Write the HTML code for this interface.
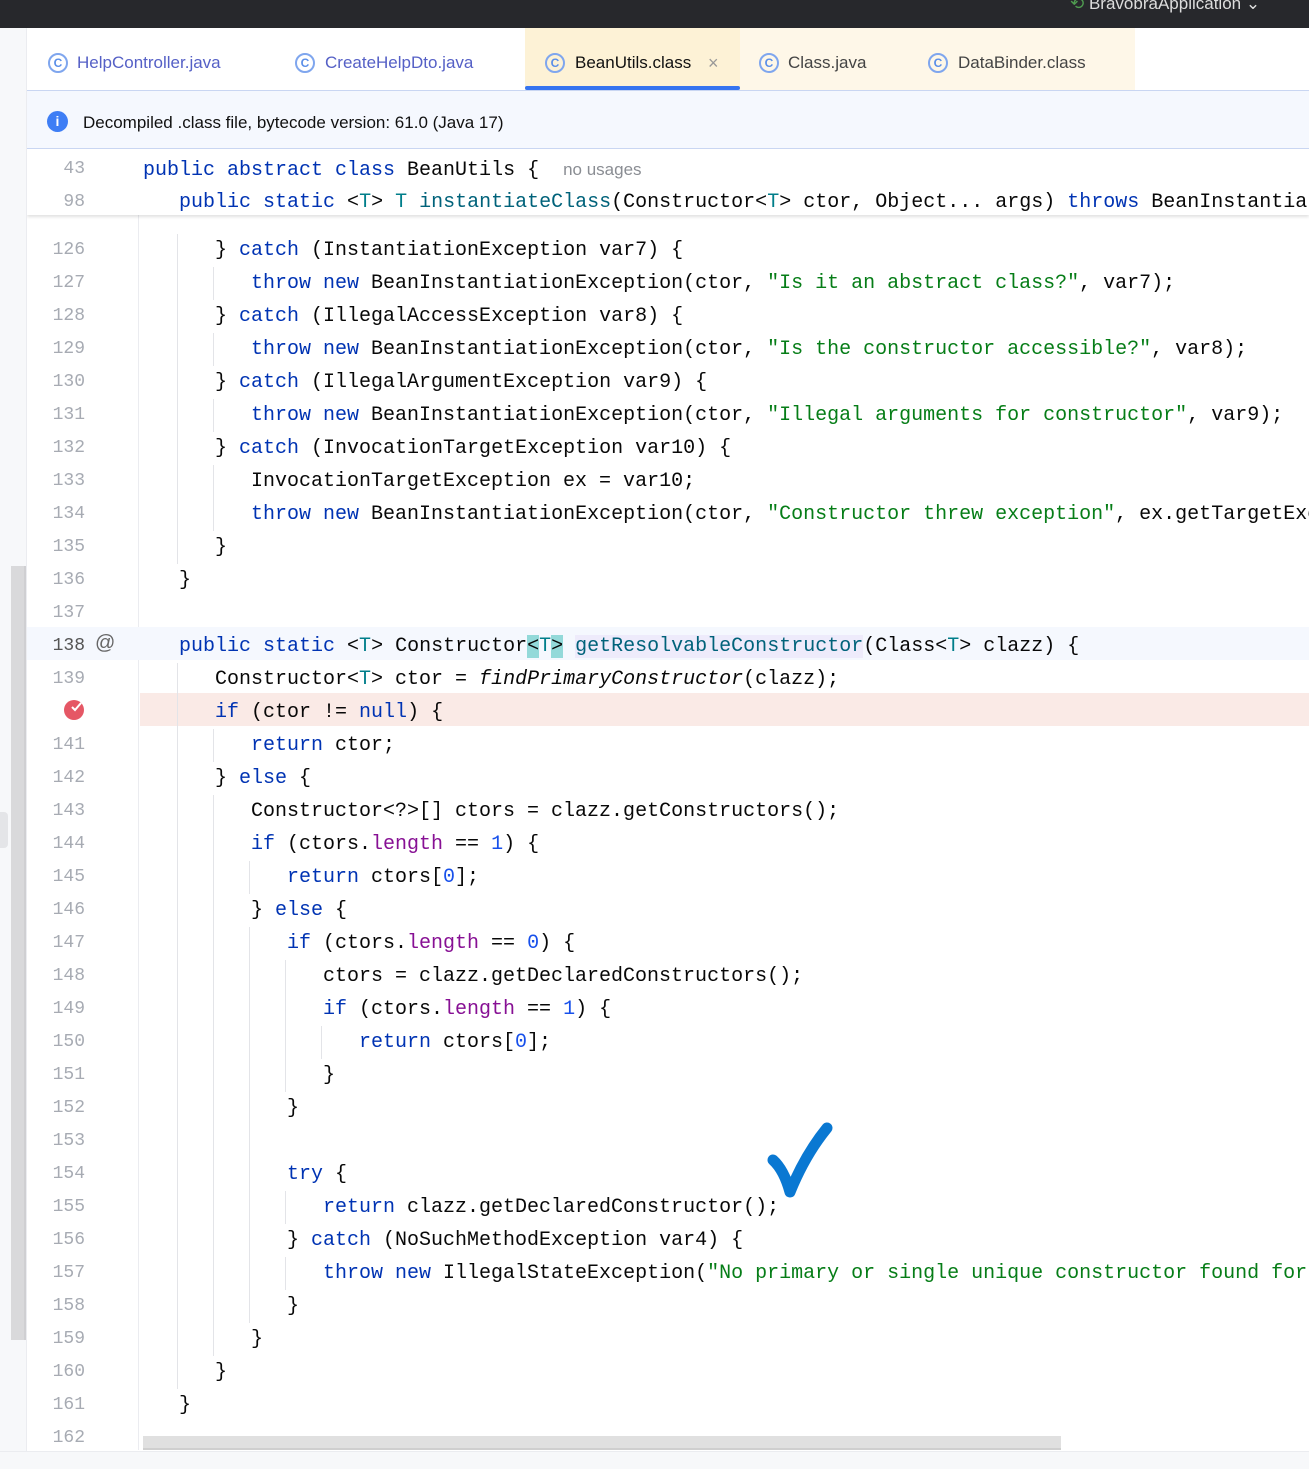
<!DOCTYPE html>
<html><head><meta charset="utf-8"><style>
*{margin:0;padding:0;box-sizing:border-box}
body{width:1309px;height:1469px;overflow:hidden;background:#fff;position:relative;font-family:"Liberation Sans",sans-serif}
.top{position:absolute;left:0;top:0;width:1309px;height:28px;background:#27282c}
.left{position:absolute;left:0;top:28px;width:27px;height:1441px;background:#f7f8fa;border-right:1px solid #ebecf0}
.vs{position:absolute;left:11px;top:566px;width:15px;height:774px;background:#d9d9db;border-right:2px solid #cfcfd2}
.tabs{position:absolute;left:27px;top:28px;width:1282px;height:63px;background:#fff;border-bottom:1px solid #c9d6f2}
.tab{position:absolute;top:0;height:62px;font-size:17px;line-height:70px;color:#444}
.ic{position:absolute;top:25px;width:20px;height:20px;border:2px solid #7fa6ee;border-radius:50%;color:#5b8fe8;font-size:12px;line-height:16px;text-align:center;font-weight:bold}
.info{position:absolute;left:27px;top:91px;width:1282px;height:58px;background:#f5f8fe;border-bottom:1px solid #c9d6f2;font-size:17px;color:#111}
.code{position:absolute;left:27px;top:150px;width:1282px;height:1300px;overflow:hidden}
.ln{position:absolute;left:0;width:1282px;height:33px;font-family:"Liberation Mono",monospace;font-size:20px;line-height:33px;color:#080808;white-space:pre}
.num{position:absolute;left:0;width:58px;text-align:right;color:#a7abb3;font-size:18px}
.tx{position:absolute;left:116px}
.g{position:absolute;top:0;width:1px;height:33px;background:#e3e4e8}
.k{color:#0033b3}.s{color:#067d17}.t{color:#007e8a}.f{color:#871094}.n{color:#1750eb}.m{color:#00627a}.i{font-style:italic}
.gut{position:absolute;left:111px;top:0;width:1px;height:1300px;background:#ebecf0}
</style></head><body>
<div class="top"><div style="position:absolute;left:1070px;top:-6px;color:#ddd;font-size:17px"><span style="color:#4f9c50">⟲</span> BravobraApplication ⌄</div></div>
<div class="left"><div class="vs" style="top:538px"></div><div style="position:absolute;left:0;top:784px;width:8px;height:36px;background:#e4e5e8;border-radius:0 4px 4px 0"></div></div>
<div class="tabs">
 <div class="tab" style="left:0;width:250px"><div class="ic" style="left:21px">C</div><span style="position:absolute;left:50px;color:#5560c6">HelpController.java</span></div>
 <div class="tab" style="left:250px;width:248px"><div class="ic" style="left:18px">C</div><span style="position:absolute;left:48px;color:#5560c6">CreateHelpDto.java</span></div>
 <div class="tab" style="left:498px;width:215px;background:#fdf2d6"><div class="ic" style="left:20px">C</div><span style="position:absolute;left:50px;color:#111">BeanUtils.class</span><span style="position:absolute;left:183px;color:#999;font-size:18px">×</span><div style="position:absolute;left:0;bottom:0;width:215px;height:4px;background:#3574f0;border-radius:2px"></div></div>
 <div class="tab" style="left:713px;width:395px;background:#fef7e8"><div class="ic" style="left:19px">C</div><span style="position:absolute;left:48px">Class.java</span><div class="ic" style="left:188px">C</div><span style="position:absolute;left:218px">DataBinder.class</span></div>
</div>
<div class="info"><div style="position:absolute;left:20px;top:20px;width:21px;height:21px;border-radius:50%;background:#3e7ef5;color:#fff;font-size:14px;font-weight:bold;text-align:center;line-height:21px">i</div><span style="position:absolute;left:56px;top:22px">Decompiled .class file, bytecode version: 61.0 (Java 17)</span></div>

<div class="code">
<div class="gut"></div>
<div style="position:absolute;left:0;top:477px;width:1282px;height:33px;background:#f5f8fe"></div>
<div style="position:absolute;left:113px;top:543px;width:1169px;height:33px;background:#faeae6"></div>
<div id="lines"></div>
<div style="position:absolute;left:0;top:0;width:1282px;height:65px;background:#fff;box-shadow:0 2px 3px rgba(0,0,0,0.12)">
 <div class="ln" style="top:3px"><span class="num">43</span><span class="tx"><span class="k">public abstract class</span> BeanUtils {  <span style="font-family:'Liberation Sans',sans-serif;font-size:17px;color:#8a8d93">no usages</span></span></div>
 <div class="ln" style="top:36px"><span class="num">98</span><span class="tx">   <span class="k">public static</span> &lt;<span class="t">T</span>&gt; <span class="t">T</span> <span class="m">instantiateClass</span>(Constructor&lt;<span class="t">T</span>&gt; ctor, Object... args) <span class="k">throws</span> BeanInstantiationException {</span></div>
</div>
</div>

<svg style="position:absolute;left:0;top:0" width="1309" height="1469">
 <circle cx="74" cy="710" r="10" fill="#e55765"/>
 <path d="M72 707l3 3 6-7" stroke="#fff" stroke-width="2" fill="none"/>
 <path d="M773 1160 Q784 1170 790 1192 Q805 1155 827 1128" stroke="#0a78d2" stroke-width="11" fill="none" stroke-linecap="round" stroke-linejoin="round"/>
</svg>
<div style="position:absolute;left:95px;top:632px;font-size:20px;color:#666">@</div>
<div style="position:absolute;left:143px;top:1436px;width:918px;height:14px;background:#e0e0e0;border-bottom:2px solid #cfcfcf"></div>
<div style="position:absolute;left:0;top:1451px;width:1309px;height:18px;background:#f7f8fa;border-top:1px solid #ebecf0"></div>

<script>
var L=[
[126,2,'} <span class="k">catch</span> (InstantiationException var7) {'],
[127,3,'<span class="k">throw new</span> BeanInstantiationException(ctor, <span class="s">"Is it an abstract class?"</span>, var7);'],
[128,2,'} <span class="k">catch</span> (IllegalAccessException var8) {'],
[129,3,'<span class="k">throw new</span> BeanInstantiationException(ctor, <span class="s">"Is the constructor accessible?"</span>, var8);'],
[130,2,'} <span class="k">catch</span> (IllegalArgumentException var9) {'],
[131,3,'<span class="k">throw new</span> BeanInstantiationException(ctor, <span class="s">"Illegal arguments for constructor"</span>, var9);'],
[132,2,'} <span class="k">catch</span> (InvocationTargetException var10) {'],
[133,3,'InvocationTargetException ex = var10;'],
[134,3,'<span class="k">throw new</span> BeanInstantiationException(ctor, <span class="s">"Constructor threw exception"</span>, ex.getTargetException());'],
[135,2,'}'],
[136,1,'}'],
[137,0,''],
[138,1,'<span class="k">public static</span> &lt;<span class="t">T</span>&gt; Constructor<span style="background:#93d9d9">&lt;</span><span class="t">T</span><span style="background:#93d9d9">&gt;</span> <span class="m" style="background:#eeebfb">getResolvableConstructor</span>(Class&lt;<span class="t">T</span>&gt; clazz) {'],
[139,2,'Constructor&lt;<span class="t">T</span>&gt; ctor = <span class="i">findPrimaryConstructor</span>(clazz);'],
[140,2,'<span class="k">if</span> (ctor != <span class="k">null</span>) {'],
[141,3,'<span class="k">return</span> ctor;'],
[142,2,'} <span class="k">else</span> {'],
[143,3,'Constructor&lt;?&gt;[] ctors = clazz.getConstructors();'],
[144,3,'<span class="k">if</span> (ctors.<span class="f">length</span> == <span class="n">1</span>) {'],
[145,4,'<span class="k">return</span> ctors[<span class="n">0</span>];'],
[146,3,'} <span class="k">else</span> {'],
[147,4,'<span class="k">if</span> (ctors.<span class="f">length</span> == <span class="n">0</span>) {'],
[148,5,'ctors = clazz.getDeclaredConstructors();'],
[149,5,'<span class="k">if</span> (ctors.<span class="f">length</span> == <span class="n">1</span>) {'],
[150,6,'<span class="k">return</span> ctors[<span class="n">0</span>];'],
[151,5,'}'],
[152,4,'}'],
[153,4,''],
[154,4,'<span class="k">try</span> {'],
[155,5,'<span class="k">return</span> clazz.getDeclaredConstructor();'],
[156,4,'} <span class="k">catch</span> (NoSuchMethodException var4) {'],
[157,5,'<span class="k">throw new</span> IllegalStateException(<span class="s">"No primary or single unique constructor found for "</span> + clazz);'],
[158,4,'}'],
[159,3,'}'],
[160,2,'}'],
[161,1,'}'],
[162,0,'']
];
var h='';
L.forEach(function(a){
 var top=248+(a[0]-126)*33-150-14;
 var g='';
 for(var k=1;k<a[1];k++){g+='<div class="g" style="left:'+(114+36*k)+'px"></div>';}
 var num=a[0]==140?'':a[0];
 var nc=a[0]==138?' style="color:#555"':'';
 h+='<div class="ln" style="top:'+top+'px">'+g+'<span class="num"'+nc+'>'+num+'</span><span class="tx" style="left:'+(116+36*a[1])+'px">'+a[2]+'</span></div>';
});
document.getElementById('lines').innerHTML=h;
</script>
</body></html>
